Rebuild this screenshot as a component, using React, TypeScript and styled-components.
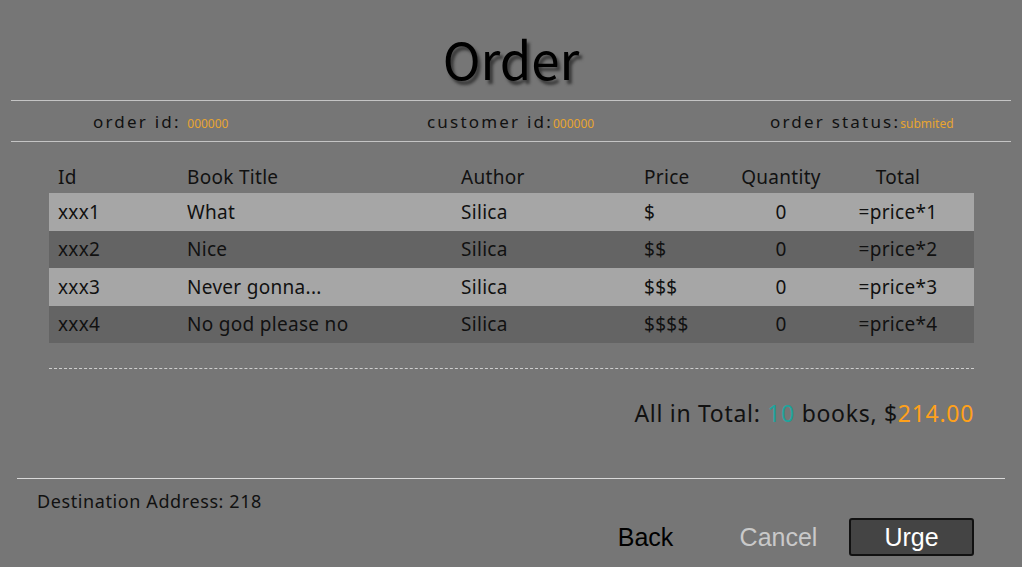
import styled, { createGlobalStyle } from "styled-components";

const GlobalStyle = createGlobalStyle`
  html, body {
    margin: 0;
    padding: 0;
    background: #767676;
  }
  body {
    font-family: "Noto Sans", "Noto Sans CJK KR", sans-serif;
    color: #111;
  }
`;

type Book = {
  id: string;
  title: string;
  author: string;
  price: string;
  quantity: number;
  total: string;
};

const books: Book[] = [
  { id: "xxx1", title: "What", author: "Silica", price: "$", quantity: 0, total: "=price*1" },
  { id: "xxx2", title: "Nice", author: "Silica", price: "$$", quantity: 0, total: "=price*2" },
  { id: "xxx3", title: "Never gonna...", author: "Silica", price: "$$$", quantity: 0, total: "=price*3" },
  { id: "xxx4", title: "No god please no", author: "Silica", price: "$$$$", quantity: 0, total: "=price*4" },
];

export default function App() {
  return (
    <>
      <GlobalStyle />
      <StPage>
        <StTitle>Order</StTitle>

        <StInfoRow>
          <StInfo>
            order id: <StInfoValue>000000</StInfoValue>
          </StInfo>
          <StInfo>
            customer id:<StInfoValue>000000</StInfoValue>
          </StInfo>
          <StInfo>
            order status:<StInfoValue>submited</StInfoValue>
          </StInfo>
        </StInfoRow>

        <StTable>
          <StRow>
            <StCell>Id</StCell>
            <StCell>Book Title</StCell>
            <StCell>Author</StCell>
            <StCell>Price</StCell>
            <StCell $center>Quantity</StCell>
            <StCell $center>Total</StCell>
          </StRow>
          {books.map((book, idx) => (
            <StRow key={book.id} $tone={idx % 2 === 0 ? "light" : "dark"}>
              <StCell>{book.id}</StCell>
              <StCell>{book.title}</StCell>
              <StCell>{book.author}</StCell>
              <StCell>{book.price}</StCell>
              <StCell $center>{book.quantity}</StCell>
              <StCell $center>{book.total}</StCell>
            </StRow>
          ))}
        </StTable>

        <StSummary>
          All in Total: <StCount>10</StCount> books, $<StAmount>214.00</StAmount>
        </StSummary>

        <StFooter>
          <StAddress>Destination Address: 218</StAddress>
          <StActions>
            <StButton>Back</StButton>
            <StButton $variant="muted">Cancel</StButton>
            <StButton $variant="primary">Urge</StButton>
          </StActions>
        </StFooter>
      </StPage>
    </>
  );
}

const StPage = styled.div`
  width: 1000px;
  height: 567px;
  margin: 0 11px;

  display: flex;
  flex-direction: column;
`;

const StTitle = styled.h1`
  height: 100px;
  margin: 0;
  padding-top: 20px;
  box-sizing: border-box;

  font-family: "Noto Sans CJK KR", "Noto Sans", sans-serif;
  text-align: center;
  font-size: 51px;
  font-weight: 400;
  line-height: 76px;
  color: #000;
  text-shadow: 3px 4px 3px #3a3a3a;
`;

const StInfoRow = styled.div`
  height: 42px;
  box-sizing: border-box;

  display: grid;
  grid-template-columns: 334px 343px auto;
  align-items: center;
  padding-left: 82px;
  padding-top: 4px;

  border-top: 1px solid #c4c4c4;
  border-bottom: 1px solid #c4c4c4;
`;

const StInfo = styled.div`
  font-size: 17px;
  letter-spacing: 2.2px;
  line-height: 24px;
  color: #111;
`;

const StInfoValue = styled.span`
  font-size: 12px;
  letter-spacing: 0;
  color: #e8a530;
`;

const StTable = styled.div`
  margin: 18px 37px 0 38px;
  padding-bottom: 25px;
  border-bottom: 1px dashed #cfcfcf;
`;

const StRow = styled.div<{ $tone?: "light" | "dark" }>`
  height: 37.5px;

  display: grid;
  grid-template-columns: 129px 274px 183px 105px 82px 152px;
  align-items: center;

  background: ${({ $tone }) =>
    $tone === "light" ? "#a6a6a6" : $tone === "dark" ? "#646464" : "transparent"};

  &:first-child {
    height: 33px;
  }
`;

const StCell = styled.div<{ $center?: boolean }>`
  padding: ${({ $center }) => ($center ? "0" : "0 9px")};
  text-align: ${({ $center }) => ($center ? "center" : "left")};
  white-space: nowrap;

  font-size: 19px;
  letter-spacing: 0.3px;
  line-height: 26px;
  color: #111;
`;

const StSummary = styled.div`
  height: 109px;
  box-sizing: border-box;
  padding: 29px 37px 0 0;

  text-align: right;
  font-size: 23px;
  letter-spacing: 0.7px;
  line-height: 30px;
  color: #111;
  white-space: pre;
`;

const StCount = styled.span`
  color: #1fa39c;
`;

const StAmount = styled.span`
  color: #ffa11a;
`;

const StFooter = styled.div`
  margin: 0 6px;
  padding: 10px 0 0 20px;

  border-top: 1px solid #d9d9d9;
`;

const StAddress = styled.div`
  font-size: 18px;
  letter-spacing: 0.6px;
  line-height: 24px;
  color: #111;
`;

const StActions = styled.div`
  margin-top: 5px;
  padding-right: 31px;

  display: flex;
  justify-content: flex-end;
  align-items: center;
  gap: 8px;
`;

const StButton = styled.button<{ $variant?: "plain" | "muted" | "primary" }>`
  width: 125px;
  height: 38px;
  padding: 0;

  background: ${({ $variant }) => ($variant === "primary" ? "#444" : "none")};
  border: 2px solid ${({ $variant }) => ($variant === "primary" ? "#111" : "transparent")};
  border-radius: 3px;

  font-family: "Liberation Sans", Arial, sans-serif;
  font-size: 25px;
  color: ${({ $variant }) =>
    $variant === "primary" ? "#fff" : $variant === "muted" ? "#c9c9c9" : "#000"};
`;
